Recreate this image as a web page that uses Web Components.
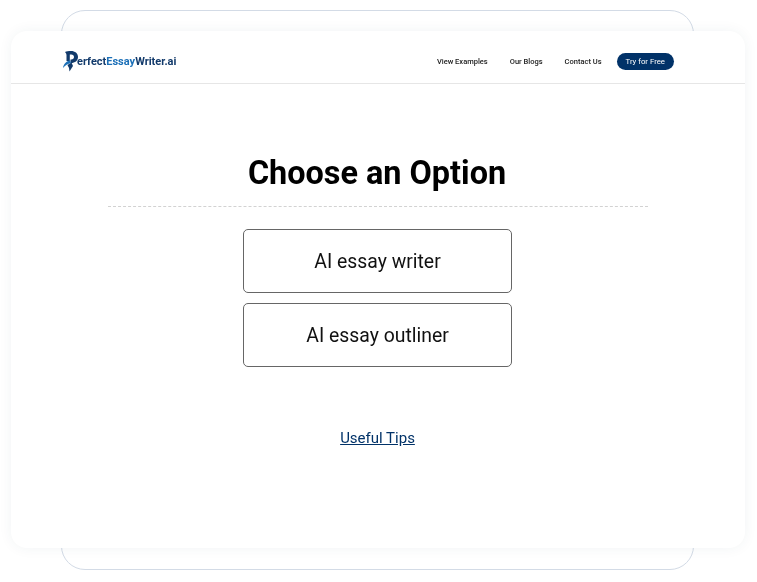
<!DOCTYPE html>
<html>
<head>
<meta charset="utf-8">
<style>
    html, body { margin: 0; background: #fff; }
    body { font-family: Roboto, "Liberation Sans", sans-serif; height: 582px; overflow: hidden; }
</style>
</head>
<body>
<back-frame>
    <main-card>
        <top-bar slot="header"></top-bar>
        <h1-title>Choose an Option</h1-title>
        <option-list>
            <option-button>AI essay writer</option-button>
            <option-button>AI essay outliner</option-button>
        </option-list>
        <tips-link>Useful Tips</tips-link>
    </main-card>
</back-frame>

<script>
function makeElement(name, html) {
    const template = document.createElement('template');
    template.innerHTML = html;
    customElements.define(name, class extends HTMLElement {
        constructor() {
            super();
            this.attachShadow({ mode: 'open' }).appendChild(template.content.cloneNode(true));
        }
    });
}

makeElement('back-frame', `
    <style>
        :host {
            display: block;
            box-sizing: border-box;
            width: 633px;
            height: 560px;
            margin: 10px 0 0 61px;
            padding-top: 20px;
            border: 1px solid #d3dbe6;
            border-radius: 24px;
        }
        ::slotted(*) { margin-left: -51px; }
    </style>
    <slot></slot>
`);

makeElement('main-card', `
    <style>
        :host {
            display: block;
            box-sizing: border-box;
            width: 734px;
            height: 517px;
            background: #fff;
            border-radius: 16px;
            box-shadow: 0 0 14px rgba(40, 60, 90, 0.06);
            will-change: opacity;
        }
    </style>
    <slot name="header"></slot>
    <slot></slot>
`);

makeElement('top-bar', `
    <style>
        :host {
            display: flex;
            align-items: center;
            justify-content: space-between;
            box-sizing: border-box;
            height: 53px;
            padding: 8px 71px 0 52px;
            border-bottom: 1px solid #e6e6e6;
        }
        .logo {
            display: flex;
            align-items: center;
            font-size: 11px;
            font-weight: 700;
            color: #123a6b;
        }
        .logo svg { margin-right: -2px; }
        .logo b { color: #1c70b8; font-weight: 700; }
        nav { display: flex; align-items: center; font-size: 7.5px; color: #222; font-weight: 500; }
        nav a { margin-right: 22px; }
        nav a:nth-child(3) { margin-right: 15px; }
        .cta {
            background: #013268;
            color: #fff;
            border-radius: 9px;
            padding: 0 9px;
            height: 17px;
            line-height: 18px;
            font-size: 7.8px;
            font-weight: 400;
        }
    </style>
    <div class="logo">
        <svg width="16" height="21" viewBox="0 0 16 21">
            <path d="M2 1C3.500.3 5.500 0 8 0c4 0 7 2.200 7 6s-3 6-7 6h-.5V8.500h.7c1.800 0 2.800-1 2.800-2.500s-1-2.500-2.800-2.500H6.800V10H3.500V4C3.500 3 3 2 2 1z" fill="#123a6b"/>
            <path d="M0 17C.5 13 3.500 10 7 9.500L8 12C5 12.500 2 14.500 0 17z" fill="#1c70b8"/>
            <path d="M4.500 14l4-2.500L10 15l-1 1.500-2.500 4L6 17z" fill="#123a6b"/>
        </svg>
        <span>erfect<b>Essay</b>Writer.ai</span>
    </div>
    <nav>
        <a>View Examples</a>
        <a>Our Blogs</a>
        <a>Contact Us</a>
        <span class="cta">Try for Free</span>
    </nav>
`);

makeElement('h1-title', `
    <style>
        :host {
            display: block;
            box-sizing: border-box;
            width: 540px;
            margin: 0 auto;
            padding: 70px 2px 14px 0;
            border-bottom: 1px dashed #d2d2d2;
            text-align: center;
            font-size: 32.4px;
            line-height: 38px;
            font-weight: 700;
            color: #000;
        }
    </style>
    <slot></slot>
`);

makeElement('option-list', `
    <style>
        :host {
            display: flex;
            flex-direction: column;
            align-items: center;
            gap: 10px;
            margin: 22px 2px 0 0;
        }
    </style>
    <slot></slot>
`);

makeElement('option-button', `
    <style>
        :host {
            display: flex;
            align-items: center;
            justify-content: center;
            box-sizing: border-box;
            width: 269px;
            height: 64px;
            padding-left: 1px;
            border: 1px solid #666;
            border-radius: 5px;
            font-size: 19.4px;
            color: #111;
        }
    </style>
    <slot></slot>
`);

makeElement('tips-link', `
    <style>
        :host {
            display: block;
            margin: 61px 2px 0 0;
            padding-left: 1px;
            text-align: center;
            font-size: 15px;
            line-height: 20px;
            color: #013268;
            text-decoration: underline;
        }
    </style>
    <slot></slot>
`);
</script>
</body>
</html>
